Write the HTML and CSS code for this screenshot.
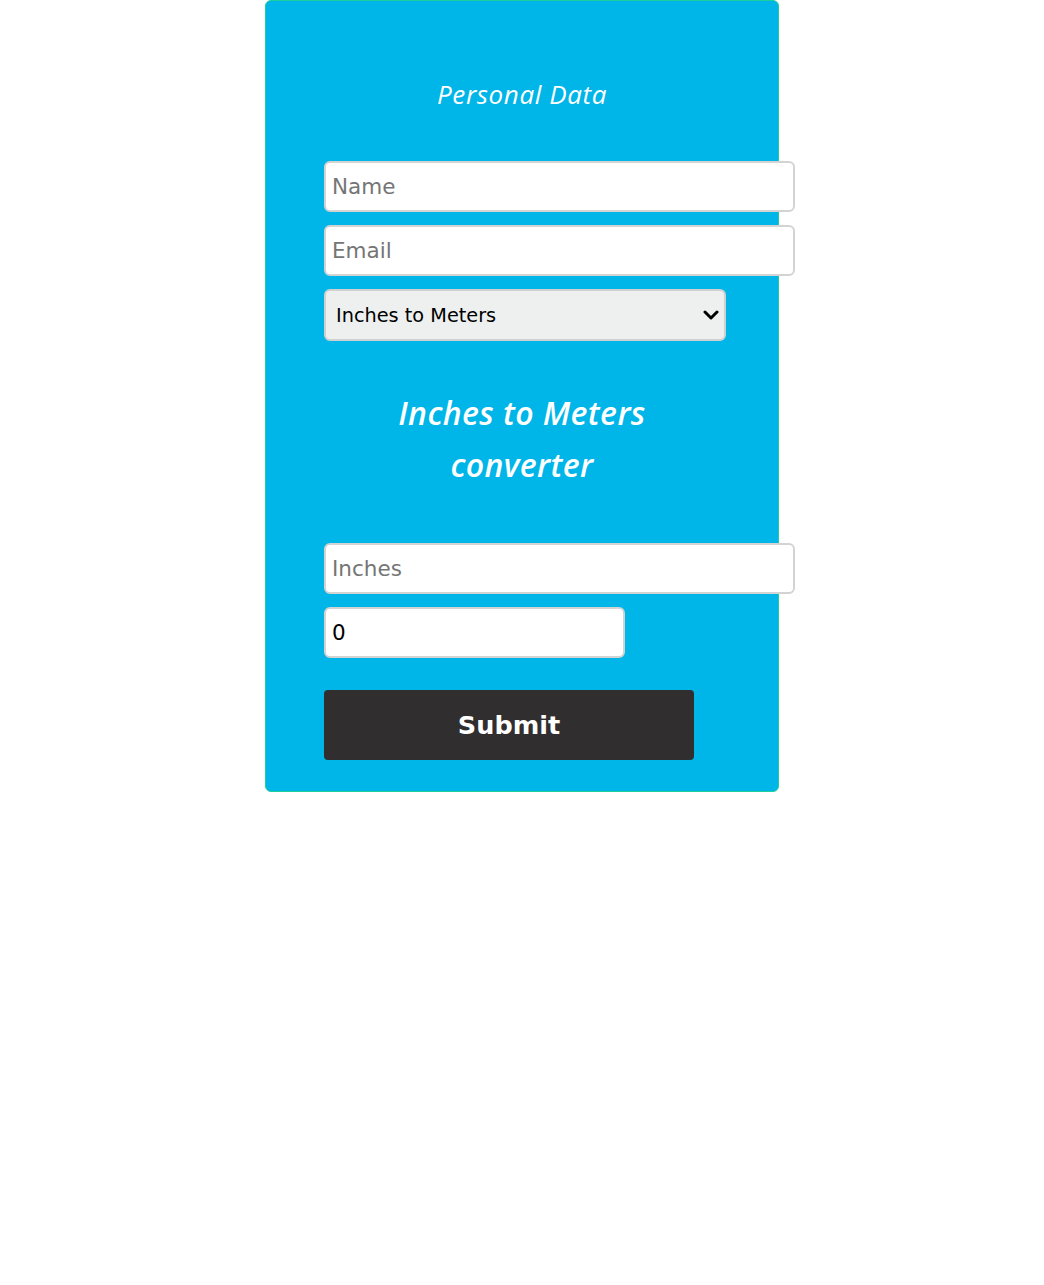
FILE: index.html
```html
<!DOCTYPE html>
<html lang="en">
<head>
<meta charset="utf-8">
<title>Inches to Meters converter</title>
<link rel="stylesheet" href="styles.css">
</head>
<body>
<form class="card">
  <h2 class="title">Personal Data</h2>
  <div class="fields">
    <input class="field wide" type="text" placeholder="Name">
    <input class="field wide" type="email" placeholder="Email">
    <div class="select-wrap">
      <select class="select">
        <option>Inches to Meters</option>
      </select>
      <svg class="chevron" viewBox="0 0 16 12" width="16" height="12" aria-hidden="true">
        <path d="M2 3 L8 9 L14 3" fill="none" stroke="#000" stroke-width="3" stroke-linecap="round" stroke-linejoin="round"/>
      </svg>
    </div>
  </div>
  <h1 class="heading">Inches to Meters<br>converter</h1>
  <div class="fields">
    <input class="field wide" type="text" placeholder="Inches">
    <input class="field narrow" type="text" value="0">
  </div>
  <button class="submit" type="button">Submit</button>
</form>
</body>
</html>
```
FILE: styles.css
```css
html, body {
  margin: 0;
  padding: 0;
  background: #ffffff;
}

.card {
  box-sizing: border-box;
  width: 514px;
  margin: 0 auto;
  padding: 77px 58px 31px;
  background: #00b5e8;
  border: 1px solid #1ccf9c;
  border-radius: 6px;
  display: flex;
  flex-direction: column;
  align-items: flex-start;
}

.title {
  align-self: stretch;
  margin: 0 0 51px;
  text-align: center;
  font-family: "Open Sans", "Noto Sans", sans-serif;
  font-style: italic;
  font-weight: 500;
  font-size: 26px;
  letter-spacing: 0.6px;
  line-height: 32px;
  color: #ffffff;
}

.fields {
  display: flex;
  flex-direction: column;
  align-items: flex-start;
  gap: 13px;
}

.field {
  box-sizing: border-box;
  height: 51px;
  padding: 0 6px;
  border: 2px solid #d3d3d3;
  border-radius: 6px;
  background: #ffffff;
  font-family: "DejaVu Sans", Verdana, sans-serif;
  font-size: 21.5px;
  color: #000000;
  outline: none;
}

.field::placeholder {
  color: #757575;
}

.wide {
  width: 471px;
}

.narrow {
  width: 301px;
}

.select-wrap {
  position: relative;
  width: 402px;
}

.select {
  -webkit-appearance: none;
  appearance: none;
  box-sizing: border-box;
  width: 402px;
  height: 52px;
  padding: 0 40px 0 10px;
  border: 2px solid #d0d0d0;
  border-radius: 6px;
  background: #eef0f0;
  font-family: "DejaVu Sans", Verdana, sans-serif;
  font-size: 19.3px;
  color: #000000;
  outline: none;
}

.chevron {
  position: absolute;
  right: 7px;
  top: 20px;
  pointer-events: none;
}

.heading {
  align-self: stretch;
  margin: 46px 0 52px;
  text-align: center;
  font-family: "Open Sans", "Noto Sans", sans-serif;
  font-style: italic;
  font-weight: 600;
  font-size: 32px;
  letter-spacing: 0.4px;
  line-height: 52px;
  color: #ffffff;
}

.submit {
  box-sizing: border-box;
  width: 370px;
  height: 70px;
  margin-top: 32px;
  border: none;
  border-radius: 4px;
  background: #302e2f;
  color: #ffffff;
  font-family: "DejaVu Sans", Verdana, sans-serif;
  font-weight: 700;
  font-size: 25.5px;
  cursor: pointer;
}
```
